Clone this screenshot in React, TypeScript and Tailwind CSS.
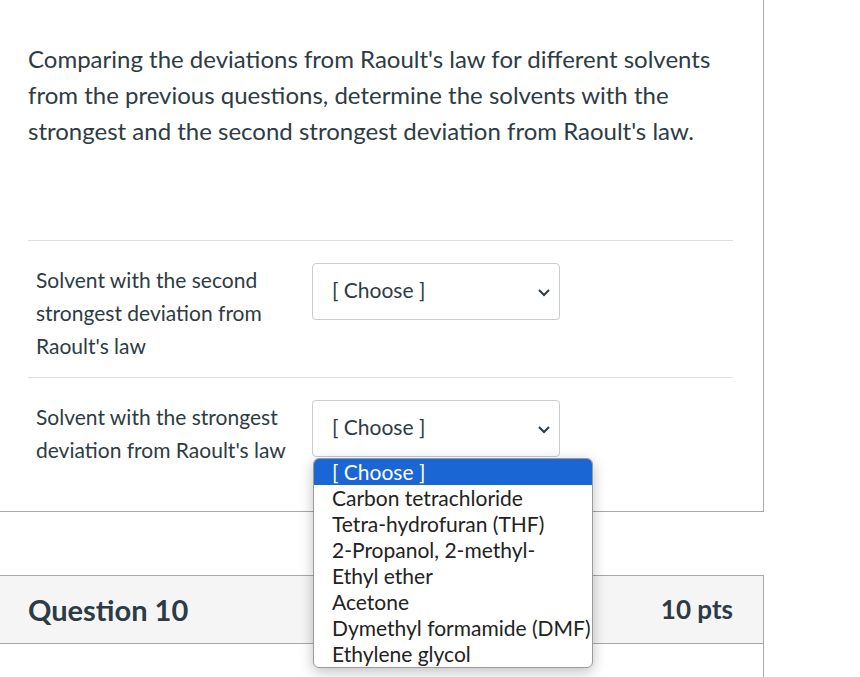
import React from "react";

const options = [
  "[ Choose ]",
  "Carbon tetrachloride",
  "Tetra-hydrofuran (THF)",
  "2-Propanol, 2-methyl-",
  "Ethyl ether",
  "Acetone",
  "Dymethyl formamide (DMF)",
  "Ethylene glycol",
];

function Chevron() {
  return (
    <svg width="14" height="10" viewBox="0 0 14 10" className="absolute right-[8px] top-1/2 -translate-y-1/2">
      <polyline points="2,3 7,8 12,3" fill="none" stroke="#2d3b45" strokeWidth="2" />
    </svg>
  );
}

function SelectBox({ open }: { open?: boolean }) {
  return (
    <div className="relative">
      <div className="relative flex h-[57px] w-[248px] items-center rounded-[4px] border border-[#c7cdd1] bg-white pb-[3px] pl-[19px] text-[21px] text-[#2d3b45]">
        [ Choose ]
        <Chevron />
      </div>
      {open ? (
        <ul className="absolute left-[1px] top-[58px] z-10 w-[280px] overflow-hidden rounded-[6px] border border-[#9a9a9a] bg-white py-0 text-[21px] leading-[26px] text-[#222] shadow-[0_4px_14px_rgba(0,0,0,0.25)]">
          {options.map((o, i) => (
            <li
              key={o}
              className={
                i === 0
                  ? "h-[26px] bg-[#1a66d5] pl-[18px] text-white"
                  : "h-[26px] pl-[18px]"
              }
            >
              {o}
            </li>
          ))}
        </ul>
      ) : null}
    </div>
  );
}

function Row({ label, open, last }: { label: string; open?: boolean; last?: boolean }) {
  return (
    <div className={"flex border-t border-[#dcdfe2] pt-[22px] " + (last ? "pb-[45px]" : "pb-[15px]")}>
      <div className="w-[284px] pl-[8px] text-[21px] leading-[33px]">
        <div className="w-[262px]">{label}</div>
      </div>
      <SelectBox open={open} />
    </div>
  );
}

export default function App() {
  return (
    <div
      className="h-[677px] w-[860px] overflow-hidden bg-white text-[#2d3b45]"
      style={{ fontFamily: "Lato, 'Open Sans', sans-serif" }}
    >
      <div className="w-[764px] border-b border-r border-[#a8a8a8] pl-[28px] pr-[30px] pt-[41px]">
        <p className="text-[24px] leading-[36px]">
          Comparing the deviations from Raoult's law for different solvents from the previous questions,
          determine the solvents with the strongest and the second strongest deviation from Raoult's law.
        </p>
        <div className="h-[91px]" />
        <Row label="Solvent with the second strongest deviation from Raoult's law" />
        <Row label="Solvent with the strongest deviation from Raoult's law" open last />
      </div>
      <div className="mt-[63px] h-[200px] w-[764px] border-r border-t border-[#a8a8a8]">
        <div className="flex h-[68px] items-center justify-between border-b border-[#a8a8a8] bg-[#f5f5f5] pl-[28px] pr-[30px]">
          <span className="text-[29px] font-bold">Question 10</span>
          <span className="text-[26px] font-bold">10 pts</span>
        </div>
      </div>
    </div>
  );
}
